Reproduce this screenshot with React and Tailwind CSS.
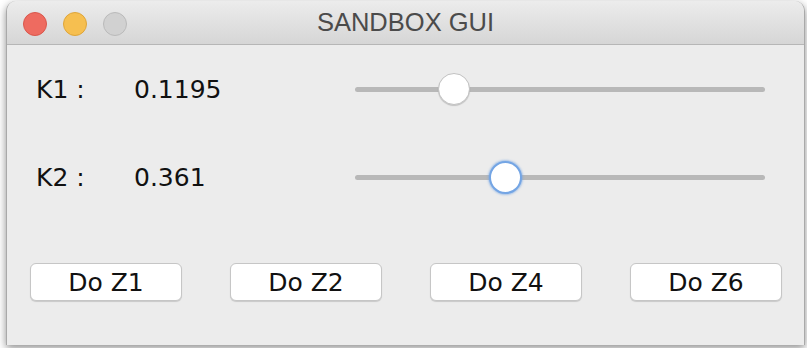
import React from "react";

const sliders = [
  { label: "K1 :", value: "0.1195", thumb: 83, focused: false },
  { label: "K2 :", value: "0.361", thumb: 134, focused: true },
];

const buttons = ["Do Z1", "Do Z2", "Do Z4", "Do Z6"];

function Slider({ thumb, focused }) {
  return (
    <div className="relative w-[410px] h-[34px] flex items-center">
      <div className="w-full h-[5px] rounded-full bg-[#b8b8b8]" />
      {/* thumb sits over the track */}
      <div
        className={
          focused
            ? "absolute top-[1px] w-[33px] h-[33px] rounded-full bg-white border-[2px] border-[#74a5e4] shadow-[0_0_2px_1px_rgba(116,165,228,0.6)]"
            : "absolute top-[1px] w-[32px] h-[32px] rounded-full bg-white border border-[#c2c2c2] shadow-[0_1px_1px_rgba(0,0,0,0.18)]"
        }
        style={{ left: thumb }}
      />
    </div>
  );
}

export default function App() {
  return (
    <div className="w-[807px] h-[348px] bg-white overflow-hidden pl-[6px] pt-[1px]">
      <div className="w-[799px] h-[344px] rounded-t-[10px] bg-[#ececec] border-x border-[#a9a9a9] shadow-[0_3px_8px_rgba(0,0,0,0.45)] flex flex-col overflow-hidden">
        {/* title bar */}
        <div className="relative h-[44px] shrink-0 flex items-center justify-center bg-gradient-to-b from-[#ececec] to-[#d6d6d6] border-b border-[#b6b6b6]">
          <div className="absolute left-[16px] top-[11px] flex gap-[16px]">
            <div className="w-[24px] h-[24px] rounded-full bg-[#ee6b60] border border-[#d9574c]" />
            <div className="w-[24px] h-[24px] rounded-full bg-[#f6bf50] border border-[#dea53a]" />
            <div className="w-[24px] h-[24px] rounded-full bg-[#d1d1d1] border border-[#bababa]" />
          </div>
          <span className="text-[25.5px] text-[#4b4b4b] font-['Liberation_Sans',Arial,sans-serif] leading-none">
            SANDBOX GUI
          </span>
        </div>

        {/* body */}
        <div className="flex flex-col pt-[27px] font-['DejaVu_Sans',sans-serif] text-[25px] text-[#111]">
          <div className="flex flex-col gap-[54px] pl-[29px]">
            {sliders.map((s) => (
              <div key={s.label} className="flex items-center h-[34px]">
                <span className="w-[98px] leading-none">{s.label}</span>
                <span className="w-[221px] leading-none">{s.value}</span>
                <Slider thumb={s.thumb} focused={s.focused} />
              </div>
            ))}
          </div>

          <div className="flex gap-[48px] pl-[23px] mt-[69px]">
            {buttons.map((b) => (
              <div
                key={b}
                className="w-[152px] h-[38px] rounded-[6px] bg-white border border-[#c6c6c6] shadow-[0_1px_1px_rgba(0,0,0,0.15)] flex items-center justify-center leading-none"
              >
                {b}
              </div>
            ))}
          </div>
        </div>
      </div>
    </div>
  );
}
